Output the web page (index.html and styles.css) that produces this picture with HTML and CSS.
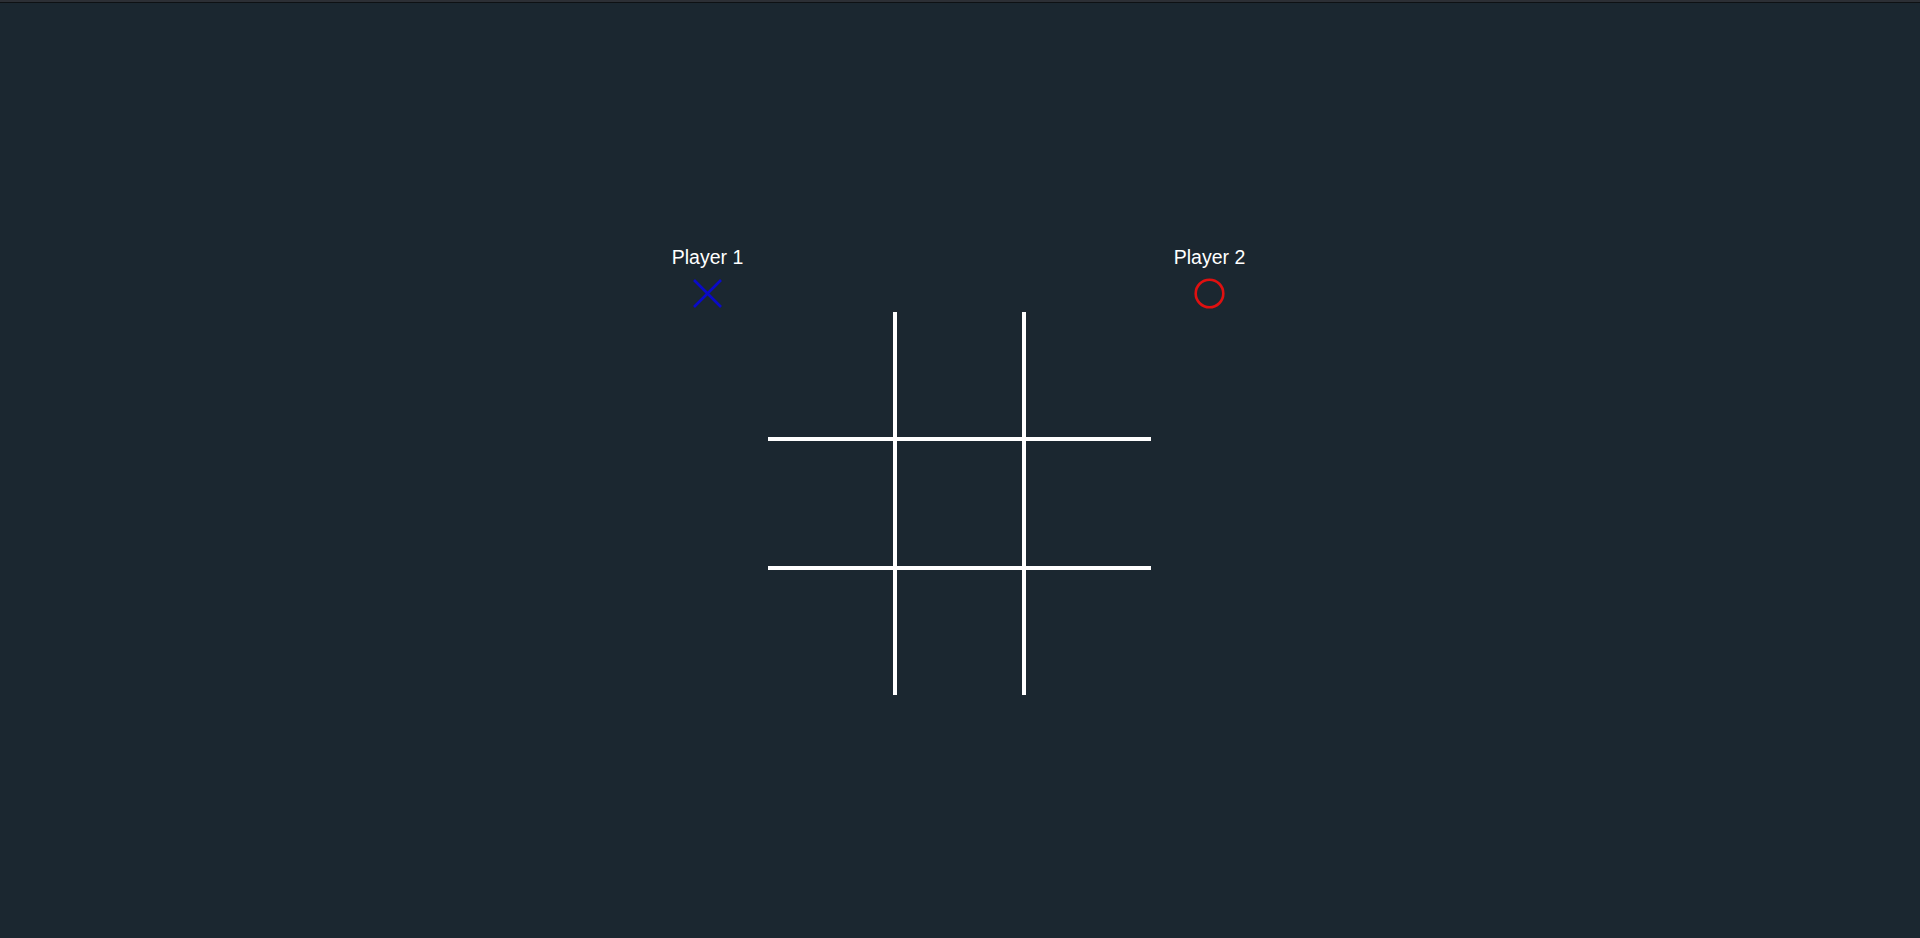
FILE: index.html
```html
<!DOCTYPE html>
<html lang="en">
<head>
<meta charset="utf-8">
<title>Tic Tac Toe</title>
<link rel="stylesheet" href="styles.css">
</head>
<body>
<div class="topbar"></div>
<main class="game">
  <section class="player player-one">
    <div class="player-name">Player 1</div>
    <svg class="mark" width="31" height="31" viewBox="0 0 31 31">
      <line x1="2" y1="2" x2="29" y2="29" stroke="#0a0ac8" stroke-width="2.6"/>
      <line x1="29" y1="2" x2="2" y2="29" stroke="#0a0ac8" stroke-width="2.6"/>
    </svg>
  </section>
  <section class="board">
    <div class="cell"></div><div class="cell"></div><div class="cell"></div>
    <div class="cell"></div><div class="cell"></div><div class="cell"></div>
    <div class="cell"></div><div class="cell"></div><div class="cell"></div>
  </section>
  <section class="player player-two">
    <div class="player-name">Player 2</div>
    <svg class="mark" width="31" height="31" viewBox="0 0 31 31">
      <circle cx="15.5" cy="15.5" r="13.8" fill="none" stroke="#e01010" stroke-width="2.6"/>
    </svg>
  </section>
</main>
</body>
</html>
```
FILE: styles.css
```css
html, body {
  margin: 0;
  padding: 0;
  height: 100%;
  background: #1b2730;
  font-family: "Liberation Sans", Arial, sans-serif;
}
.topbar {
  height: 2px;
  background: #2c2f35;
  border-bottom: 1px solid #0e1114;
}
.game {
  display: flex;
  justify-content: center;
  align-items: flex-start;
  padding-top: 243px;
  padding-right: 3px;
}
.player {
  width: 100px;
  display: flex;
  flex-direction: column;
  align-items: center;
}
.player-one {
  margin-right: 10.5px;
}
.player-two {
  margin-left: 8.5px;
}
.player-name {
  color: #ffffff;
  font-size: 19.5px;
  line-height: 22px;
}
.mark {
  display: block;
  margin-top: 10px;
}
.board {
  margin-top: 66px;
  width: 383px;
  height: 383px;
  display: grid;
  grid-template-columns: repeat(3, 1fr);
  grid-template-rows: repeat(3, 1fr);
  gap: 4px;
  background: #ffffff;
}
.cell {
  background: #1b2730;
}
```
